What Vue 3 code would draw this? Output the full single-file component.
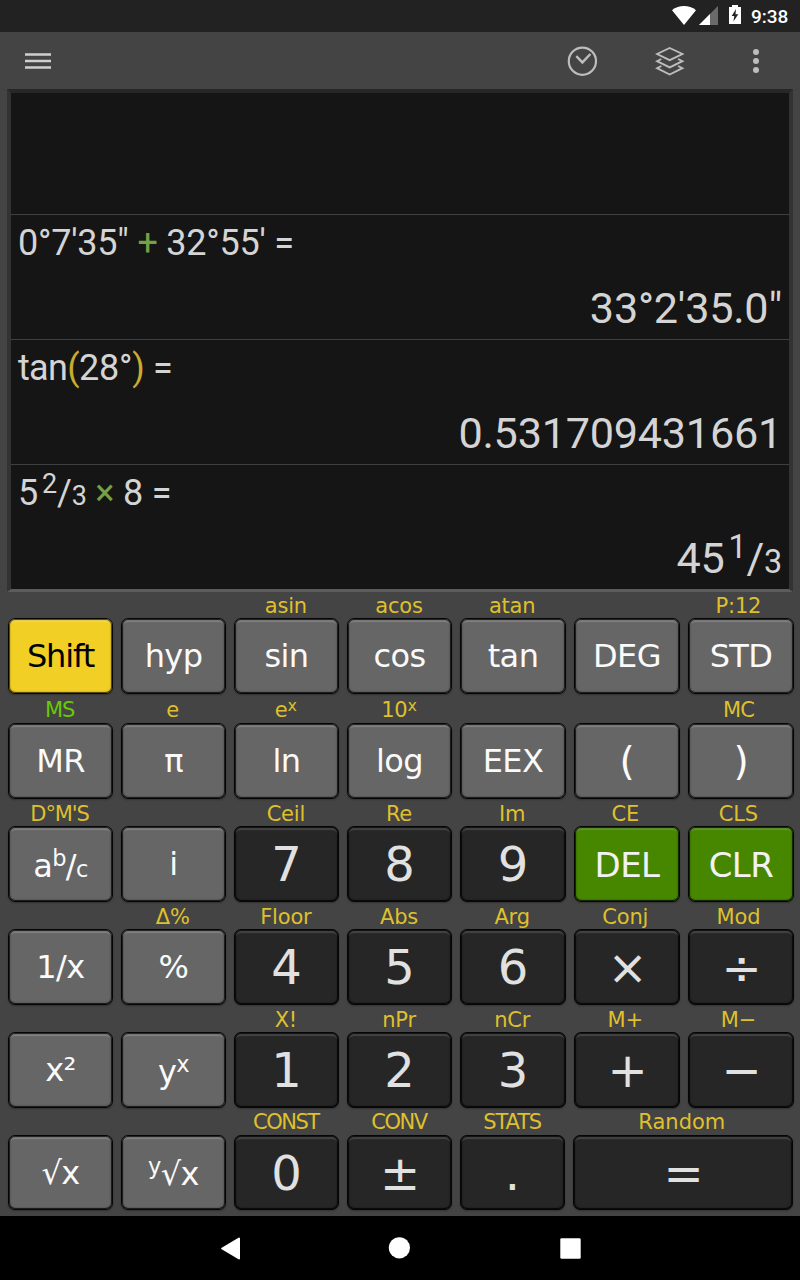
<script setup>
const rows = [
  {
    labels: [{}, {}, { t: 'asin' }, { t: 'acos' }, { t: 'atan' }, {}, { t: 'P:12' }],
    keys: [
      { t: 'Shift', k: 'shift' }, { t: 'hyp' }, { t: 'sin' }, { t: 'cos' },
      { t: 'tan' }, { t: 'DEG' }, { t: 'STD' },
    ],
  },
  {
    labels: [{ t: 'MS', k: 'green tight' }, { t: 'e' }, { t: 'e', sup: 'x' }, { t: '10', sup: 'x' }, {}, {}, { t: 'MC', k: 'tight' }],
    keys: [{ t: 'MR' }, { t: 'π' }, { t: 'ln' }, { t: 'log' }, { t: 'EEX' }, { t: '(', k: 'bracket' }, { t: ')', k: 'bracket' }],
  },
  {
    labels: [{ t: "D°M'S", k: 'tight' }, {}, { t: 'Ceil' }, { t: 'Re' }, { t: 'Im' }, { t: 'CE' }, { t: 'CLS' }],
    keys: [
      { t: 'a', sup: 'b', post: '/', sub: 'c', k: 'frac' }, { t: 'i' },
      { t: '7', k: 'num' }, { t: '8', k: 'num' }, { t: '9', k: 'num' },
      { t: 'DEL', k: 'go' }, { t: 'CLR', k: 'go' },
    ],
  },
  {
    labels: [{}, { t: 'Δ%' }, { t: 'Floor' }, { t: 'Abs' }, { t: 'Arg' }, { t: 'Conj' }, { t: 'Mod' }],
    keys: [
      { t: '1/x' }, { t: '%' }, { t: '4', k: 'num' }, { t: '5', k: 'num' },
      { t: '6', k: 'num' }, { t: '×', k: 'num oper' }, { t: '÷', k: 'num oper' },
    ],
  },
  {
    labels: [{}, {}, { t: 'X!' }, { t: 'nPr' }, { t: 'nCr' }, { t: 'M+' }, { t: 'M−' }],
    keys: [
      { t: 'x²' }, { t: 'y', sup: 'x', k: 'pow' }, { t: '1', k: 'num' }, { t: '2', k: 'num' },
      { t: '3', k: 'num' }, { t: '+', k: 'num oper' }, { t: '−', k: 'num oper' },
    ],
  },
  {
    last: true,
    labels: [{}, {}, { t: 'CONST', k: 'tighter' }, { t: 'CONV', k: 'tighter' }, { t: 'STATS', k: 'tight' }, { t: 'Random', k: 'wide' }],
    keys: [
      { t: '√x' }, { pre: 'y', t: '√x', k: 'root' }, { t: '0', k: 'num' }, { t: '±', k: 'num oper' },
      { t: '.', k: 'num' }, { t: '=', k: 'num oper' },
    ],
  },
]
</script>

<template>
  <div class="screen">
    <header class="status">
      <svg class="wifi" width="24" height="19" viewBox="0 0 24 19"><path d="M12 19 0 4.2C7-1.4 17-1.4 24 4.2Z" fill="#fff" /></svg>
      <svg class="signal" width="19" height="19" viewBox="0 0 19 19"><path d="M19 0V19H0Z" fill="#6a6a6a" /><path d="M11 8V19H0Z" fill="#fff" /></svg>
      <svg class="battery" width="12" height="19" viewBox="0 0 12 19"><path d="M0 2H3V0H9V2H12V19H0Z" fill="#fff" /><path d="M7 4 2.7 11H5.3L4.4 16.5 9.3 9.3H6.5Z" fill="#222" /></svg>
      <span class="clock">9:38</span>
    </header>

    <nav class="toolbar">
      <svg class="menu" width="26" height="18" viewBox="0 0 26 18"><path d="M0 2.5H26M0 9H26M0 15.5H26" stroke="#d0d0d0" stroke-width="2.6" /></svg>
      <svg class="history" width="32" height="32" viewBox="0 0 32 32" fill="none" stroke="#bdbdbd"><circle cx="16.4" cy="16.2" r="13.6" stroke-width="2.2" /><path d="M10.3 11.2 16.4 17.4 24.4 9" stroke-width="2.4" /></svg>
      <svg class="layers" width="30" height="30" viewBox="0 0 30 30" fill="none" stroke="#bdbdbd" stroke-width="1.9"><path d="M14.7 2 27.4 8 14.7 14.2 2 8Z" /><path d="M6.3 13 2 15.2 14.7 21.4 27.4 15.2 23.1 13" /><path d="M6.3 20 2 22.2 14.7 28.5 27.4 22.2 23.1 20" /></svg>
      <svg class="more" width="8" height="26" viewBox="0 0 8 26" fill="#bdbdbd"><circle cx="4" cy="4" r="3" /><circle cx="4" cy="13" r="3" /><circle cx="4" cy="22" r="3" /></svg>
    </nav>

    <main class="display">
      <section class="entry blank"></section>
      <section class="entry">
        <div class="expr">0°7'35" <span class="op">+</span> 32°55' =</div>
        <div class="result">33°2'35.0"</div>
      </section>
      <section class="entry">
        <div class="expr"><span class="fn">tan</span><span class="paren">(</span>28°<span class="paren">)</span> =</div>
        <div class="result">0.531709431661</div>
      </section>
      <section class="entry">
        <div class="expr">5<span class="numer">2</span>/<span class="denom">3</span> <span class="op">×</span> 8 =</div>
        <div class="result">45<span class="numer">1</span>/<span class="denom">3</span></div>
      </section>
    </main>

    <div class="keypad">
      <div v-for="(row, r) in rows" :key="r" class="row">
        <div class="labels">
          <span v-for="(l, i) in row.labels" :key="i" :class="l.k"><b>{{ l.t }}<i v-if="l.sup">{{ l.sup }}</i></b></span>
        </div>
        <div class="keys" :class="{ last: row.last }">
          <button v-for="(k, i) in row.keys" :key="i" :class="k.k"><b><i v-if="k.pre" class="sup">{{ k.pre }}</i>{{ k.t }}<i v-if="k.sup" class="sup">{{ k.sup }}</i>{{ k.post }}<i v-if="k.sub">{{ k.sub }}</i></b></button>
        </div>
      </div>
    </div>

    <footer class="navbar">
      <svg class="back" width="20" height="23" viewBox="0 0 20 23"><path d="M18 1.5V21.5L1.2 11.5Z" fill="#fff" stroke="#fff" stroke-width="2" stroke-linejoin="round" /></svg>
      <svg class="home" width="22" height="22" viewBox="0 0 22 22"><circle cx="11.4" cy="10.8" r="10.6" fill="#fff" /></svg>
      <svg class="recent" width="21" height="21" viewBox="0 0 21 21"><rect x=".3" y=".3" width="20.4" height="20.4" rx="1.3" fill="#fff" /></svg>
    </footer>
  </div>
</template>

<style>
html, body { margin: 0; background: #000; }
</style>

<style scoped>
.screen { width: 800px; height: 1280px; display: flex; flex-direction: column; overflow: hidden; background: #444; font-family: "DejaVu Sans", sans-serif; }
svg { display: block; flex: none; }
b, i { font-weight: 400; font-style: normal; }

.status { height: 32px; flex: none; box-sizing: border-box; display: flex; padding: 6px 0 0 672px; background: #222; color: #fff; }
.signal { margin-left: 3px; }
.battery { margin-left: 11px; margin-top: -1px; }
.clock { margin-left: 10px; margin-top: -6px; font: 500 19px/33px Roboto, sans-serif; }

.toolbar { height: 57px; flex: none; display: flex; align-items: center; padding-left: 25px; }
.menu { margin-top: 1px; }
.history { margin-left: 515px; }
.layers { margin-left: 57px; }
.more { margin-left: 67px; }

.display { width: 778px; flex: none; margin-left: 7px; border: 4px solid; border-color: #272727 #333 #5c5c5c #333; border-bottom-width: 3px; background: #151515; color: #d4d4d4; font-family: Roboto, sans-serif; }
.entry { height: 124px; padding: 0 7px; border-top: 1px solid #404040; white-space: pre; }
.blank { height: 121px; border-top: 0; }
.expr { height: 55px; line-height: 57px; font-size: 36px; letter-spacing: -.22px; }
.result { height: 62px; padding-top: 8px; line-height: 62px; font-size: 43.2px; letter-spacing: -.24px; text-align: right; }
.fn { letter-spacing: -.7px; }
.op { color: #76a043; }
.paren { color: #c9ac2e; letter-spacing: -.5px; }
.numer, .denom { font-size: .75em; line-height: 0; }
.numer { vertical-align: .46em; margin-left: 4px; }

.keypad { flex: none; height: 624px; }
.labels { height: 27px; box-sizing: border-box; display: grid; grid-template-columns: repeat(7, 113.15px); padding: 2px 0 0 3px; font-size: 21px; line-height: 26px; letter-spacing: -.2px; color: #dfc02c; text-align: center; white-space: nowrap; }
.row:first-child .labels { height: 26px; padding-top: 1px; }
.row:nth-child(2) .labels { height: 29px; padding-top: 3px; }
.row:last-child .labels { padding-top: 1px; }
.labels i { font-size: 16px; line-height: 0; vertical-align: 6.5px; }
.labels .green { color: #68ca00; }
.labels .wide { grid-column: span 2; letter-spacing: 0; }
.labels .tight { letter-spacing: -1.1px; }
.labels .tighter { letter-spacing: -1.5px; }

.keys { display: grid; grid-template-columns: repeat(4, 105px) repeat(3, 106px); column-gap: 8px; padding-left: 8px; height: 76px; }
.keys.last { grid-template-columns: repeat(5, 105px) 220px; height: 75px; }
button { box-sizing: border-box; height: 76px; min-width: 0; margin: 0; padding: 1px; border: 1px solid #060606; border-radius: 7px; background: #666; color: #fafafa; font: 32px/72px "DejaVu Sans", sans-serif; letter-spacing: -.6px; text-align: center; white-space: nowrap; box-shadow: inset 0 0 0 1px #0009, inset 0 0 2px 1px #0006, inset 0 3px 1px #858585, 0 1px 2px #0004; }
button b { display: block; height: 72px; }
.last button { height: 75px; }
.last button b { height: 71px; line-height: 73px; }
button.shift { background: #f1cf25; color: #000; letter-spacing: -1.1px; box-shadow: inset 0 0 0 1px #0008, inset 0 0 2px 1px #0005, inset 0 3px 1px #fadc50, 0 1px 2px #0004; }
button.num { background: #262626; color: #e1e1e1; font-size: 48px; letter-spacing: 0; box-shadow: inset 0 0 0 1px #0009, inset 0 0 2px 1px #0006, inset 0 3px 1px #484848, 0 1px 2px #0004; }
button.oper b { padding-left: 1px; }
button.bracket { font-size: 39px; letter-spacing: 0; line-height: 74px; }
button.go { background: #478700; color: #f2f2f2; font-size: 34px; line-height: 74px; box-shadow: inset 0 0 0 1px #0009, inset 0 0 2px 1px #0006, inset 0 3px 1px #619d28, 0 1px 2px #0004; }
button i { font-size: 22.5px; line-height: 0; }
button .sup { vertical-align: 11px; }
.frac b, .pow b { line-height: 76px; }
.last .root b { line-height: 75px; }

.navbar { flex: 1; min-height: 0; display: flex; align-items: center; padding-left: 221px; background: #000; }
.home { margin-left: 147px; }
.recent { margin-left: 150px; }
</style>
